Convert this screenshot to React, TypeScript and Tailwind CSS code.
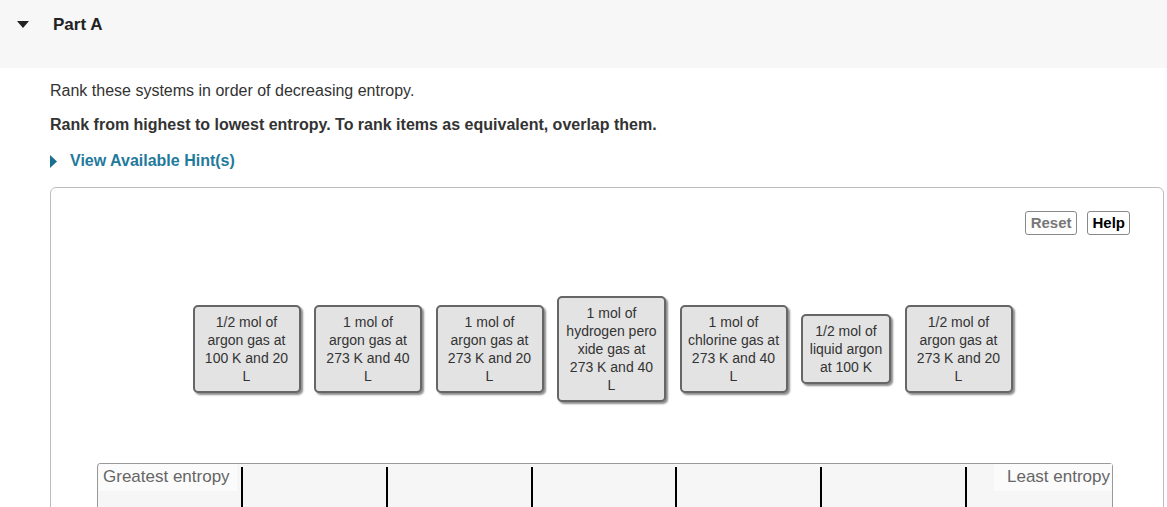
const tiles: { lines: string[]; w: string }[] = [
  { lines: ["1/2 mol of", "argon gas at", "100 K and 20", "L"], w: "w-[108px]" },
  { lines: ["1 mol of", "argon gas at", "273 K and 40", "L"], w: "w-[108px]" },
  { lines: ["1 mol of", "argon gas at", "273 K and 20", "L"], w: "w-[108px]" },
  { lines: ["1 mol of", "hydrogen pero", "xide gas at", "273 K and 40", "L"], w: "w-[109px]" },
  { lines: ["1 mol of", "chlorine gas at", "273 K and 40", "L"], w: "w-[108px]" },
  { lines: ["1/2 mol of", "liquid argon", "at 100 K"], w: "w-[90px]" },
  { lines: ["1/2 mol of", "argon gas at", "273 K and 20", "L"], w: "w-[108px]" },
];

function Tile({ lines, w }: { lines: string[]; w: string }) {
  return (
    <div
      className={`${w} rounded-[5px] border-2 border-[#666] bg-[#e3e3e3] py-[6px] text-center text-[14px] leading-[18px] text-[#333] shadow-[2px_2px_2px_rgba(0,0,0,0.45)]`}
    >
      {lines.map((l, i) => (
        <div key={i} className="whitespace-nowrap">
          {l}
        </div>
      ))}
    </div>
  );
}

export default function App() {
  return (
    <div
      className="h-[507px] overflow-hidden bg-white text-[#333]"
      style={{ fontFamily: '"Liberation Sans", Arial, sans-serif' }}
    >
      <div className="flex h-[68px] items-start bg-[#f7f7f7] pl-[17px] pt-[15px]">
        <svg width="12" height="8" viewBox="0 0 12 8" className="mt-[6px]">
          <path d="M0 0 L12 0 L6 7 Z" fill="#222" />
        </svg>
        <span className="ml-[24px] text-[17px] font-bold leading-[20px] text-[#222]">Part A</span>
      </div>

      <div className="pl-[50px] pr-[3px]">
        <p className="mt-[13px] text-[16px] leading-[20px]">
          Rank these systems in order of decreasing entropy.
        </p>
        <p className="mt-[14px] text-[16px] font-bold leading-[20px]">
          Rank from highest to lowest entropy. To rank items as equivalent, overlap them.
        </p>
        <div className="mt-[16px] flex items-center">
          <svg width="7" height="13" viewBox="0 0 7 13">
            <path d="M0 0 L7 6.5 L0 13 Z" fill="#1a6e8e" />
          </svg>
          <span className="ml-[13px] text-[16px] font-bold leading-[20px] text-[#1f7a9c]">
            View Available Hint(s)
          </span>
        </div>

        <div className="mt-[16px] h-[340px] rounded-[6px] border border-[#bdbdbd]">
          <div className="flex justify-end gap-[10px] pr-[33px] pt-[23px]">
            <button className="h-[24px] rounded-[3px] border border-[#888] px-[5px] text-[15px] font-bold text-[#777]">
              Reset
            </button>
            <button className="h-[24px] rounded-[3px] border border-[#888] px-[4px] text-[15px] font-bold text-black">
              Help
            </button>
          </div>

          <div className="mt-[61px] flex h-[106px] items-center justify-center gap-[13.5px] pr-[9px]">
            {tiles.map((t, i) => (
              <Tile key={i} lines={t.lines} w={t.w} />
            ))}
          </div>

          <div className="ml-[46px] mt-[61px] flex h-[60px] w-[1016px] rounded-t-[4px] border border-b-0 border-[#999] bg-[#f6f6f6]">
            {Array.from({ length: 7 }).map((_, i) => (
              <div key={i} className="relative flex-1">
                {i === 0 && (
                  <div className="ml-[1px] h-[27px] w-[138px] bg-[#fbfbfb] pl-[4px] pt-[2px] text-[17px] leading-[21px] text-[#666]">
                    Greatest entropy
                  </div>
                )}
                {i === 6 && (
                  <div className="ml-auto h-[27px] w-[118px] bg-[#fbfbfb] pr-[2px] pt-[2px] text-right text-[17px] leading-[21px] text-[#666]">
                    Least entropy
                  </div>
                )}
                {i < 6 && (
                  <div className="absolute right-0 top-[3px] bottom-0 w-[2px] bg-black" />
                )}
              </div>
            ))}
          </div>
        </div>
      </div>
    </div>
  );
}
